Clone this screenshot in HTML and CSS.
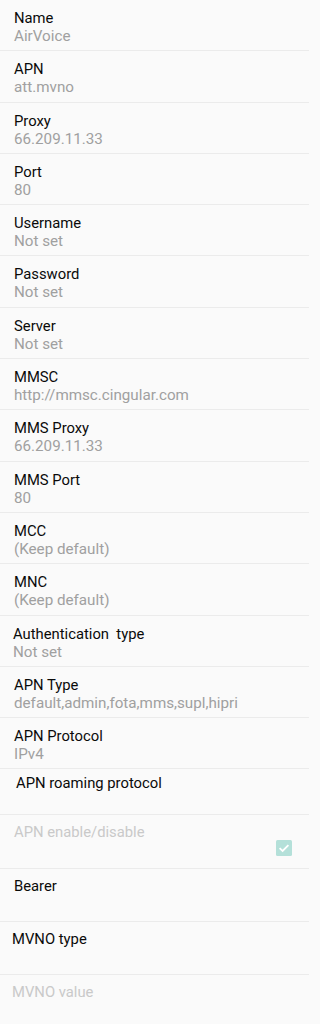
FILE: index.html
```html
<!DOCTYPE html>
<html>
<head>
<meta charset="utf-8">
<link rel="stylesheet" href="styles.css">
</head>
<body>
<div class="list">
  <div class="row"><div class="text"><div class="title">Name</div><div class="value">AirVoice</div></div></div>
  <div class="row"><div class="text"><div class="title">APN</div><div class="value">att.mvno</div></div></div>
  <div class="row"><div class="text"><div class="title">Proxy</div><div class="value">66.209.11.33</div></div></div>
  <div class="row"><div class="text"><div class="title">Port</div><div class="value">80</div></div></div>
  <div class="row"><div class="text"><div class="title">Username</div><div class="value">Not set</div></div></div>
  <div class="row"><div class="text"><div class="title">Password</div><div class="value">Not set</div></div></div>
  <div class="row"><div class="text"><div class="title">Server</div><div class="value">Not set</div></div></div>
  <div class="row"><div class="text"><div class="title">MMSC</div><div class="value">http://mmsc.cingular.com</div></div></div>
  <div class="row"><div class="text"><div class="title">MMS Proxy</div><div class="value">66.209.11.33</div></div></div>
  <div class="row"><div class="text"><div class="title">MMS Port</div><div class="value">80</div></div></div>
  <div class="row"><div class="text"><div class="title">MCC</div><div class="value">(Keep default)</div></div></div>
  <div class="row"><div class="text"><div class="title">MNC</div><div class="value">(Keep default)</div></div></div>
  <div class="row shift-l1"><div class="text"><div class="title">Authentication&nbsp; type</div><div class="value">Not set</div></div></div>
  <div class="row"><div class="text"><div class="title">APN Type</div><div class="value">default,admin,fota,mms,supl,hipri</div></div></div>
  <div class="row"><div class="text"><div class="title">APN Protocol</div><div class="value">IPv4</div></div></div>
  <div class="row shift-r2 short"><div class="text"><div class="title">APN roaming protocol</div></div></div>
  <div class="row tall disabled"><div class="text"><div class="title">APN enable/disable</div></div>
    <div class="check"><svg width="16" height="16" viewBox="0 0 16 16"><rect x="0" y="0" width="16" height="16" rx="1.5" fill="#b4e0d9"/><path d="M3.6 8.2 L6.6 11 L12.4 5.2" fill="none" stroke="#ffffff" stroke-width="1.8"/></svg></div>
  </div>
  <div class="row tall"><div class="text"><div class="title">Bearer</div></div></div>
  <div class="row tall shift-l2"><div class="text"><div class="title">MVNO type</div></div></div>
  <div class="row tall shift-l2 disabled last"><div class="text"><div class="title">MVNO value</div></div></div>
</div>
</body>
</html>
```
FILE: styles.css
```css
html, body {
  margin: 0;
  padding: 0;
  background: #fafafa;
}
body {
  font-family: Roboto, "Noto Sans", sans-serif;
  width: 309px;
}
.list {
  display: flex;
  flex-direction: column;
}
.row {
  box-sizing: border-box;
  height: 51.3px;
  border-bottom: 1px solid #ebebeb;
  padding: 10px 14px 0 14px;
  display: flex;
  align-items: flex-start;
}
.row.short { height: 46px; padding-top: 6px; }
.row.tall { height: 53.3px; padding-top: 9px; }
.row.last { border-bottom: none; }
.shift-l1 { padding-left: 13px; }
.shift-l2 { padding-left: 12px; }
.shift-r2 { padding-left: 16px; }
.text {
  display: flex;
  flex-direction: column;
}
.title {
  font-size: 14.8px;
  line-height: 17px;
  color: #0a0a0a;
}
.value {
  font-size: 15.2px;
  line-height: 18px;
  color: #a0a0a0;
}
.disabled .title {
  color: #c9c9c9;
}
.check {
  margin-left: auto;
  margin-right: 3px;
  align-self: center;
  display: flex;
  padding-top: 4px;
}
```
